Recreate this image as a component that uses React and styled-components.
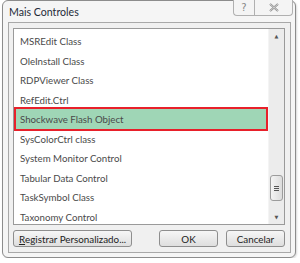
import React from 'react';
import styled, { createGlobalStyle } from 'styled-components';

const items = [
  'MSREdit Class',
  'OleInstall Class',
  'RDPViewer Class',
  'RefEdit.Ctrl',
  'Shockwave Flash Object',
  'SysColorCtrl class',
  'System Monitor Control',
  'Tabular Data Control',
  'TaskSymbol Class',
  'Taxonomy Control',
];

const App = () => (
  <>
    <GlobalStyle />
    <Window>
      <TitleBar>
        <Title>Mais Controles</Title>
        <Captions>
          <CaptionButton w={21}>?</CaptionButton>
          <CaptionButton w={39}>
            <svg width="10" height="9" viewBox="0 0 10 9">
              <path d="M1 1 L9 8 M9 1 L1 8" stroke="#8a8a8a" strokeWidth="2" fill="none" />
              <path d="M1 1 L9 8 M9 1 L1 8" stroke="#fff" strokeWidth="0.6" fill="none" />
            </svg>
          </CaptionButton>
        </Captions>
      </TitleBar>
      <Client>
        <ListBox>
          <List>
            {items.map((t, i) => (
              <Item key={t} selected={i === 4}>{t}</Item>
            ))}
          </List>
          <ScrollBar>
            <Arrow>▲</Arrow>
            <Track>
              <Thumb>
                <Grip />
                <Grip />
                <Grip />
              </Thumb>
            </Track>
            <Arrow>▼</Arrow>
          </ScrollBar>
        </ListBox>
        <Buttons>
          <Button w={119}><u>R</u>egistrar Personalizado...</Button>
          <Spacer />
          <Button w={59}>OK</Button>
          <Button w={59}>Cancelar</Button>
        </Buttons>
      </Client>
    </Window>
  </>
);

const GlobalStyle = createGlobalStyle`
  body {
    margin: 0;
    background: #ffffff;
    font-family: Lato, "Noto Sans", sans-serif;
  }
`;

const Window = styled.div`
  margin-left: 2px;
  width: 294px;
  height: 258px;
  box-sizing: border-box;
  border: 1px solid #8c8c8c;
  border-radius: 6px;
  background: #f5f5f5;
  display: flex;
  flex-direction: column;
  box-shadow: 1px 1px 2px rgba(0,0,0,0.15);
`;

const TitleBar = styled.div`
  height: 24px;
  display: flex;
  align-items: flex-start;
  justify-content: space-between;
`;

const Title = styled.div`
  font-size: 10.6px;
  color: #1e2a38;
  padding: 5px 0 0 6px;
`;

const Captions = styled.div`
  display: flex;
  margin-right: 2px;
  margin-top: -1px;
`;

const CaptionButton = styled.div`
  width: ${p => p.w}px;
  height: 16px;
  box-sizing: border-box;
  border: 1px solid #b0b0b0;
  border-top: none;
  background: #f4f4f4;
  display: flex;
  align-items: center;
  justify-content: center;
  font-family: "DejaVu Sans", sans-serif;
  font-size: 10px;
  color: #888;
  &:first-child {
    border-radius: 0 0 0 4px;
    border-right: none;
  }
  &:last-child {
    border-radius: 0 0 4px 0;
  }
`;

const Client = styled.div`
  flex: 1;
  margin: 0 4px 4px 5px;
  border: 1px solid #a8a8a8;
  background: #f0f0f0;
  padding: 5px 5px 5px 4px;
  display: flex;
  flex-direction: column;
`;

const ListBox = styled.div`
  height: 197px;
  box-sizing: border-box;
  border: 1px solid #9a9a9a;
  background: #fff;
  display: flex;
`;

const List = styled.div`
  flex: 1;
  padding-top: 2px;
`;

const Item = styled.div`
  height: 19.5px;
  line-height: 20px;
  padding-left: 6px;
  font-size: 9.7px;
  color: #4a4a4a;
  white-space: nowrap;
  box-sizing: border-box;
  ${p => p.selected && `
    height: 23.5px;
    line-height: 20px;
    margin: -2px 0 -2px 0;
    background: #9fd6b6;
    border: 2px solid #e8202a;
    padding-left: 4px;
  `}
`;

const ScrollBar = styled.div`
  width: 15px;
  background: #ececec;
  display: flex;
  flex-direction: column;
  border-left: 1px solid #f4f4f4;
`;

const Arrow = styled.div`
  height: 14px;
  font-size: 5px;
  color: #555;
  display: flex;
  align-items: center;
  justify-content: center;
  font-family: "DejaVu Sans", sans-serif;
`;

const Track = styled.div`
  flex: 1;
  display: flex;
  flex-direction: column;
  justify-content: flex-end;
  padding-bottom: 9px;
`;

const Thumb = styled.div`
  height: 26px;
  box-sizing: border-box;
  margin: 0 1px;
  border: 1px solid #9c9c9c;
  border-radius: 3px;
  background: linear-gradient(to right, #f4f4f4, #dcdcdc);
  display: flex;
  flex-direction: column;
  align-items: center;
  justify-content: center;
  gap: 1px;
`;

const Grip = styled.div`
  width: 5px;
  height: 1px;
  background: #555;
`;

const Buttons = styled.div`
  margin-top: 5px;
  display: flex;
  gap: 8px;
`;

const Spacer = styled.div`
  flex: 1;
`;

const Button = styled.div`
  width: ${p => p.w}px;
  height: 17px;
  box-sizing: border-box;
  border: 1px solid #8e8e8e;
  border-radius: 3px;
  background: linear-gradient(#f6f6f6, #dedede);
  font-size: 9.8px;
  color: #222;
  display: flex;
  align-items: center;
  justify-content: center;
  white-space: nowrap;
  u { text-decoration: underline; }
`;

export default App;
